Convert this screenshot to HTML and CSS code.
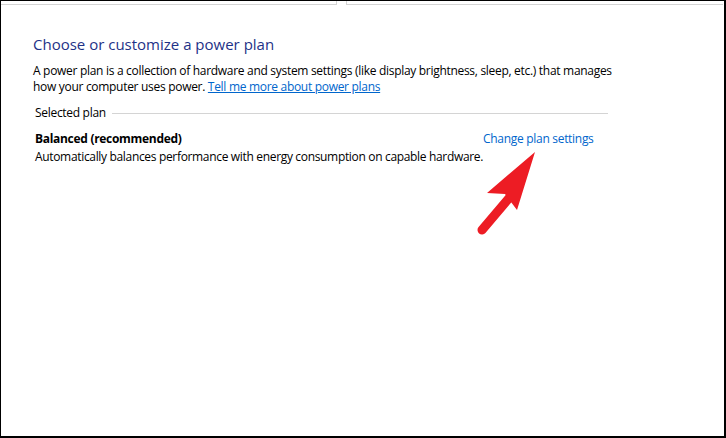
FILE: index.html
```html
<!DOCTYPE html>
<html lang="en">
<head>
  <meta charset="UTF-8">
  <title>Power Options</title>
  <link rel="stylesheet" href="styles.css">
</head>
<body>
  <div class="window">
    <div class="tabs">
      <div class="tab tab-left"></div>
      <div class="tab tab-right"></div>
    </div>

    <div class="content">
      <h1 class="title">Choose or customize a power plan</h1>
      <p class="intro">A power plan is a collection of hardware and system settings (like display brightness, sleep, etc.) that manages how your computer uses power. <a href="#" class="link">Tell me more about power plans</a></p>

      <div class="group">
        <div class="group-label">
          <span>Selected plan</span>
          <div class="group-line"></div>
        </div>
        <div class="plan">
          <div class="plan-info">
            <div class="plan-name">Balanced (recommended)</div>
            <div class="plan-desc">Automatically balances performance with energy consumption on capable hardware.</div>
          </div>
          <a href="#" class="plan-link">Change plan settings</a>
        </div>
      </div>
    </div>

    <!-- annotation arrow -->
    <svg class="arrow" width="726" height="438" viewBox="0 0 726 438">
      <line x1="482" y1="230" x2="510" y2="197" stroke="#ed1c24" stroke-width="9" stroke-linecap="round"/>
      <polygon points="535,152 487,193 505,194 517,210" fill="#ed1c24"/>
    </svg>
  </div>
</body>
</html>
```

FILE: styles.css
```css
html, body {
  margin: 0;
  padding: 0;
  background: #fff;
}
.window {
  position: relative;
  width: 726px;
  height: 438px;
  box-sizing: border-box;
  border-top: 1px solid #000;
  border-left: 1px solid #000;
  border-right: 2px solid #000;
  border-bottom: 2px solid #000;
  font-family: "Open Sans", "Noto Sans", sans-serif;
  color: #000;
  overflow: hidden;
}
.tabs {
  display: flex;
  gap: 9px;
  height: 4px;
  padding-right: 1px;
}
.tab {
  border-bottom: 1px solid #d4d4d4;
  height: 3px;
}
.tab-left {
  width: 335px;
  border-right: 1px solid #d4d4d4;
}
.tab-right {
  flex: 1;
  border-left: 1px solid #d4d4d4;
}
.content {
  padding: 29px 0 0 32px;
  width: 580px;
}
.title {
  margin: 0 0 9px;
  font-size: 15px;
  font-weight: 400;
  color: #1e3287;
  line-height: 20px;
}
.intro {
  margin: 0 0 10px;
  font-size: 12px;
  line-height: 16px;
  letter-spacing: -0.3px;
}
.link {
  color: #0066cc;
}
.group-label {
  display: flex;
  align-items: center;
  gap: 6px;
  width: 573px;
  padding-left: 2px;
  font-size: 12px;
  line-height: 16px;
  letter-spacing: -0.3px;
}
.group-line {
  flex: 1;
  border-top: 1px solid #d4d4d4;
}
.plan {
  display: flex;
  justify-content: space-between;
  padding: 10px 25px 0 2px;
  font-size: 12px;
  line-height: 16px;
  letter-spacing: -0.3px;
}
.plan-name {
  font-weight: 700;
}
.plan-desc {
  margin-top: 2px;
  white-space: nowrap;
  letter-spacing: -0.33px;
}
.plan-link {
  color: #0066cc;
  text-decoration: none;
  white-space: nowrap;
}
.arrow {
  position: absolute;
  left: -1px;
  top: -1px;
}
```
